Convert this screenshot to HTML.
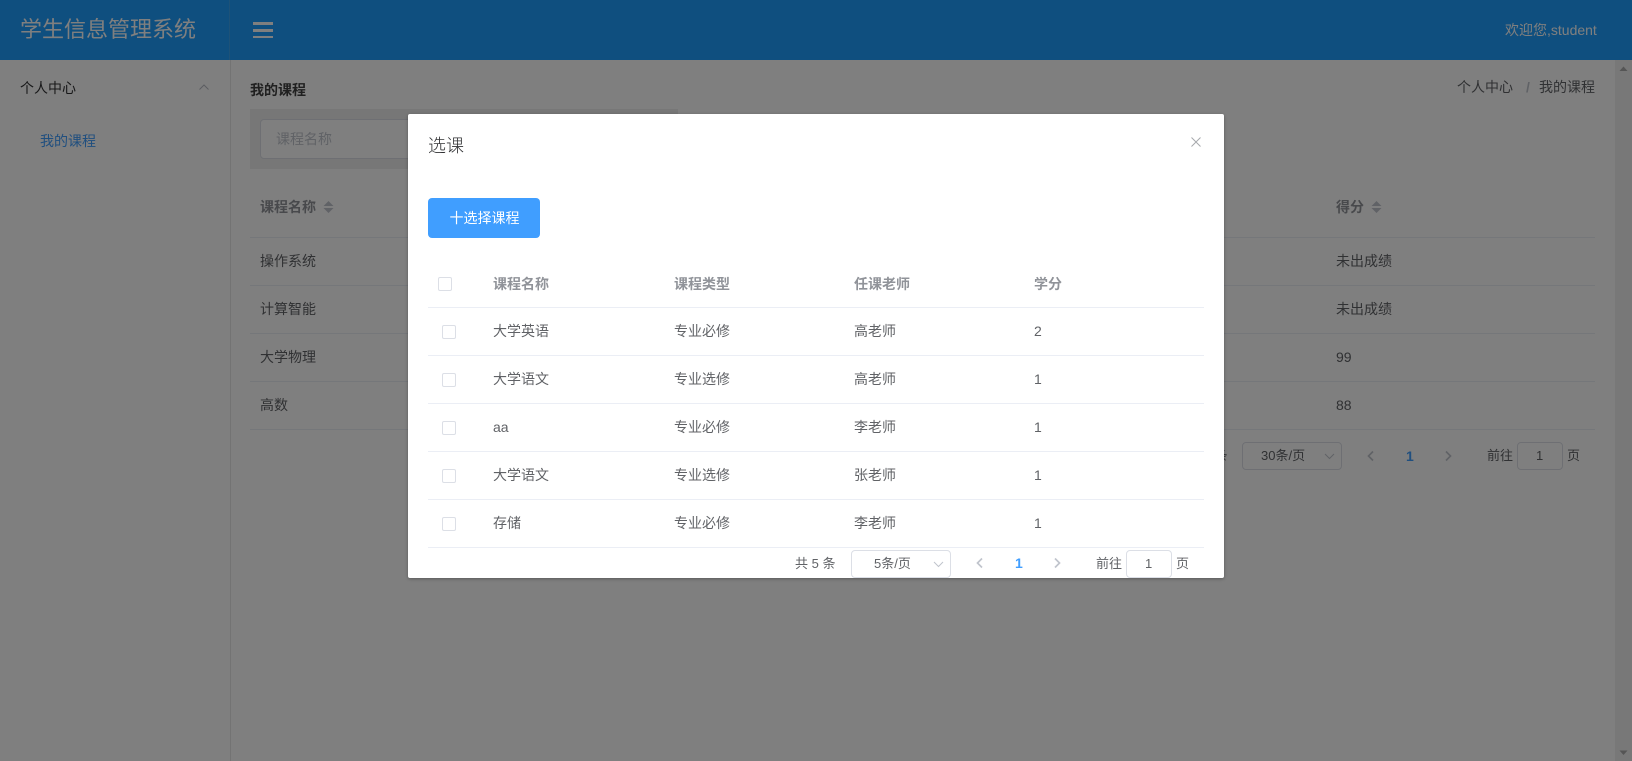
<!DOCTYPE html>
<html lang="zh"><head><meta charset="utf-8"><title>学生信息管理系统</title>
<style>
html,body{margin:0;padding:0;width:1632px;height:761px;overflow:hidden;background:#fff}
body{font-family:"Liberation Sans","Noto Sans CJK SC",sans-serif;font-size:14px;color:#606266;position:relative}
.a,.t{position:absolute}
.t{line-height:20px;height:20px;white-space:nowrap}
.b{font-weight:bold}
.s{font-size:13px}
.l{position:absolute;height:1px;background:#ebeef5}
.cb{position:absolute;width:12px;height:12px;border:1px solid #dcdfe6;border-radius:2px;background:#fff}
.box{position:absolute;box-sizing:border-box;border:1px solid #dcdfe6;border-radius:4px;background:#fff}
svg{position:absolute;display:block}
</style></head><body>
<!-- page -->
<div class="a" style="left:0;top:0;width:1632px;height:60px;background:#1f9fff"></div>
<div class="a" style="left:229px;top:0;width:1px;height:60px;background:#3aa5f0"></div>
<div class="t" style="left:20px;top:15px;height:30px;line-height:30px;font-size:22px;color:#fff">学生信息管理系统</div>
<div class="a" style="left:253px;top:22px;width:20px;height:2.500px;background:#fff"></div>
<div class="a" style="left:253px;top:29px;width:20px;height:2.500px;background:#fff"></div>
<div class="a" style="left:253px;top:35.500px;width:20px;height:2.500px;background:#fff"></div>
<div class="t" style="left:1505px;top:20px;color:#fff">欢迎您,student</div>

<div class="a" style="left:230px;top:60px;width:1px;height:701px;background:#e6e6e6"></div>
<div class="t" style="left:20px;top:78px;color:#303133">个人中心</div>
<svg style="left:199px;top:84px" width="10" height="7" viewBox="0 0 10 7"><path d="M.5 5.500L5 1 9.500 5.500" fill="none" stroke="#b8bbc2" stroke-width="1"/></svg>
<div class="t" style="left:40px;top:131px;color:#409eff">我的课程</div>

<div class="t b" style="left:250px;top:80px;color:#404040">我的课程</div>
<div class="t" style="left:1457px;top:77px;color:#606266">个人中心</div>
<div class="t" style="left:1526px;top:77px;color:#c0c4cc;font-weight:bold">/</div>
<div class="t" style="left:1539px;top:77px;color:#606266">我的课程</div>

<div class="a" style="left:250px;top:109px;width:428px;height:60px;background:#eee"></div>
<div class="box" style="left:260px;top:119px;width:200px;height:40px"></div>
<div class="t" style="left:276px;top:129px;color:#c0c4cc">课程名称</div>

<div class="t b" style="left:260px;top:197px;color:#909399">课程名称</div>
<svg style="left:323px;top:200px" width="11" height="14" viewBox="0 0 11 14"><path d="M5.500 1L10.500 6H.5zM5.500 13L.5 8H10.500z" fill="#c0c4cc"/></svg>
<div class="t b" style="left:1336px;top:197px;color:#909399">得分</div>
<svg style="left:1371px;top:200px" width="11" height="14" viewBox="0 0 11 14"><path d="M5.500 1L10.500 6H.5zM5.500 13L.5 8H10.500z" fill="#c0c4cc"/></svg>
<div class="l" style="left:250px;top:237px;width:1345px"></div>
<div class="l" style="left:250px;top:285px;width:1345px"></div>
<div class="l" style="left:250px;top:333px;width:1345px"></div>
<div class="l" style="left:250px;top:381px;width:1345px"></div>
<div class="l" style="left:250px;top:429px;width:1345px"></div>
<div class="t" style="left:260px;top:251px">操作系统</div>
<div class="t" style="left:260px;top:299px">计算智能</div>
<div class="t" style="left:260px;top:347px">大学物理</div>
<div class="t" style="left:260px;top:395px">高数</div>
<div class="t" style="left:1336px;top:251px">未出成绩</div>
<div class="t" style="left:1336px;top:299px">未出成绩</div>
<div class="t" style="left:1336px;top:347px">99</div>
<div class="t" style="left:1336px;top:395px">88</div>

<div class="t s" style="left:1187px;top:446px">共 4 条</div>
<div class="box" style="left:1242px;top:442px;width:100px;height:28px"></div>
<div class="t s" style="left:1261px;top:446px">30条/页</div>
<svg style="left:1324px;top:453px" width="11" height="7" viewBox="0 0 11 7"><path d="M1 1l4.500 4.500L10 1" fill="none" stroke="#c0c4cc"/></svg>
<svg style="left:1366px;top:450px" width="9" height="12" viewBox="0 0 9 12"><path d="M7 1.500L2.500 6 7 10.500" fill="none" stroke="#c0c4cc" stroke-width="1.700"/></svg>
<div class="t b" style="left:1406px;top:446px;color:#409eff">1</div>
<svg style="left:1444px;top:450px" width="9" height="12" viewBox="0 0 9 12"><path d="M2 1.500L6.500 6 2 10.500" fill="none" stroke="#c0c4cc" stroke-width="1.700"/></svg>
<div class="t s" style="left:1487px;top:446px">前往</div>
<div class="box" style="left:1517px;top:442px;width:46px;height:28px"></div>
<div class="t s" style="left:1536px;top:446px">1</div>
<div class="t s" style="left:1567px;top:446px">页</div>

<div class="a" style="left:1615px;top:60px;width:17px;height:701px;background:#f1f1f1"></div>
<svg style="left:1619px;top:66px" width="9" height="6" viewBox="0 0 9 6"><path d="M4.500 .5L8.500 5H.5z" fill="#aaa"/></svg>
<svg style="left:1619px;top:750px" width="9" height="6" viewBox="0 0 9 6"><path d="M.5 .5H8.500L4.500 5z" fill="#aaa"/></svg>

<!-- overlay -->
<div class="a" style="left:0;top:0;width:1632px;height:761px;background:rgba(0,0,0,.5)"></div>

<!-- dialog -->
<div class="a" style="left:408px;top:114px;width:816px;height:464px;background:#fff;border-radius:2px;box-shadow:0 1px 3px rgba(0,0,0,.3)"></div>
<div class="t" style="left:428px;top:134px;height:24px;line-height:24px;font-size:18px;color:#303133;font-weight:300">选课</div>
<svg style="left:1190px;top:136px" width="12" height="12" viewBox="0 0 12 12"><path d="M1.500 1.500l9 9M10.500 1.500l-9 9" fill="none" stroke="#a6a9ad" stroke-width="1"/></svg>
<div class="a" style="left:428px;top:198px;width:112px;height:40px;background:#409eff;border-radius:4px"></div>
<div class="t" style="left:449.500px;top:208px;color:#fff">十选择课程</div>

<div class="cb" style="left:438px;top:277px"></div>
<div class="t b" style="left:493px;top:274px;color:#909399">课程名称</div>
<div class="t b" style="left:674px;top:274px;color:#909399">课程类型</div>
<div class="t b" style="left:854px;top:274px;color:#909399">任课老师</div>
<div class="t b" style="left:1034px;top:274px;color:#909399">学分</div>
<div class="l" style="left:428px;top:307px;width:776px"></div>
<div class="l" style="left:428px;top:355px;width:776px"></div>
<div class="l" style="left:428px;top:403px;width:776px"></div>
<div class="l" style="left:428px;top:451px;width:776px"></div>
<div class="l" style="left:428px;top:499px;width:776px"></div>
<div class="l" style="left:428px;top:547px;width:776px"></div>

<div class="cb" style="left:442px;top:325px"></div>
<div class="t" style="left:493px;top:321px">大学英语</div><div class="t" style="left:674px;top:321px">专业必修</div><div class="t" style="left:854px;top:321px">高老师</div><div class="t" style="left:1034px;top:321px">2</div>
<div class="cb" style="left:442px;top:373px"></div>
<div class="t" style="left:493px;top:369px">大学语文</div><div class="t" style="left:674px;top:369px">专业选修</div><div class="t" style="left:854px;top:369px">高老师</div><div class="t" style="left:1034px;top:369px">1</div>
<div class="cb" style="left:442px;top:421px"></div>
<div class="t" style="left:493px;top:417px">aa</div><div class="t" style="left:674px;top:417px">专业必修</div><div class="t" style="left:854px;top:417px">李老师</div><div class="t" style="left:1034px;top:417px">1</div>
<div class="cb" style="left:442px;top:469px"></div>
<div class="t" style="left:493px;top:465px">大学语文</div><div class="t" style="left:674px;top:465px">专业选修</div><div class="t" style="left:854px;top:465px">张老师</div><div class="t" style="left:1034px;top:465px">1</div>
<div class="cb" style="left:442px;top:517px"></div>
<div class="t" style="left:493px;top:513px">存储</div><div class="t" style="left:674px;top:513px">专业必修</div><div class="t" style="left:854px;top:513px">李老师</div><div class="t" style="left:1034px;top:513px">1</div>

<div class="t s" style="left:795px;top:554px">共 5 条</div>
<div class="box" style="left:851px;top:550px;width:100px;height:28px"></div>
<div class="t s" style="left:874px;top:554px">5条/页</div>
<svg style="left:933px;top:561px" width="11" height="7" viewBox="0 0 11 7"><path d="M1 1l4.500 4.500L10 1" fill="none" stroke="#c0c4cc"/></svg>
<svg style="left:975px;top:557px" width="9" height="12" viewBox="0 0 9 12"><path d="M7 1.500L2.500 6 7 10.500" fill="none" stroke="#c0c4cc" stroke-width="1.700"/></svg>
<div class="t b" style="left:1015px;top:553px;color:#409eff">1</div>
<svg style="left:1053px;top:557px" width="9" height="12" viewBox="0 0 9 12"><path d="M2 1.500L6.500 6 2 10.500" fill="none" stroke="#c0c4cc" stroke-width="1.700"/></svg>
<div class="t s" style="left:1096px;top:554px">前往</div>
<div class="box" style="left:1126px;top:550px;width:46px;height:28px"></div>
<div class="t s" style="left:1145px;top:554px">1</div>
<div class="t s" style="left:1176px;top:554px">页</div>
</body></html>
